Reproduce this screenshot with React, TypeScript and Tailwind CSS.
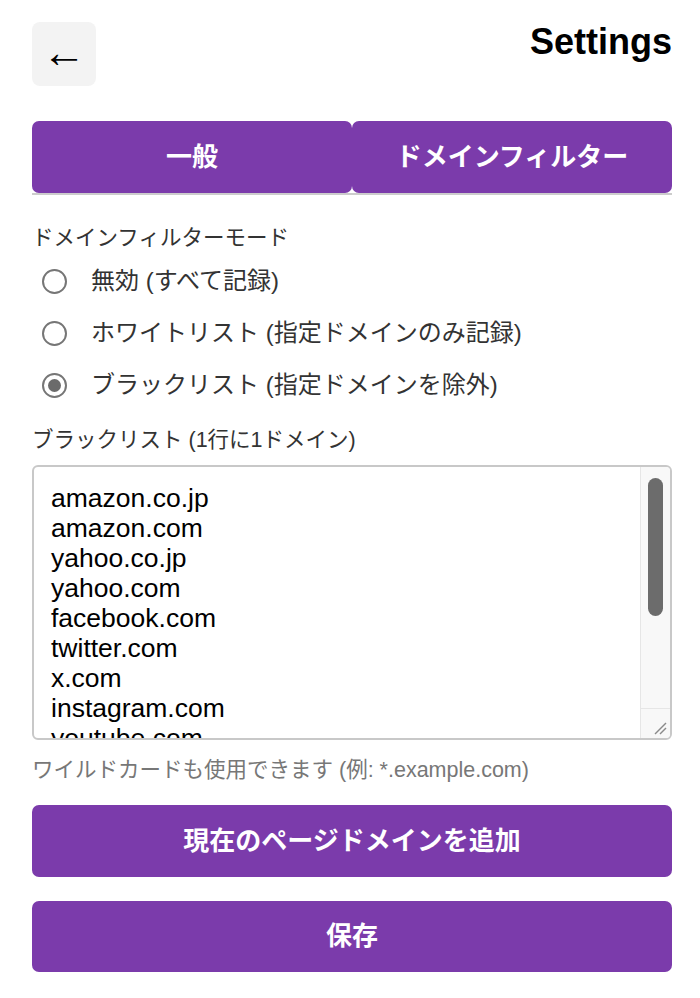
import React from 'react';

const domains = [
  'amazon.co.jp',
  'amazon.com',
  'yahoo.co.jp',
  'yahoo.com',
  'facebook.com',
  'twitter.com',
  'x.com',
  'instagram.com',
  'youtube.com',
  'google.com',
];

const modes = [
  { label: '無効 (すべて記録)', checked: false },
  { label: 'ホワイトリスト (指定ドメインのみ記録)', checked: false },
  { label: 'ブラックリスト (指定ドメインを除外)', checked: true },
];

const Radio = ({ checked }: { checked: boolean }) => (
  <span className="w-[25px] h-[25px] rounded-full border-[2.5px] border-[#767676] bg-white flex items-center justify-center shrink-0">
    {checked && <span className="w-[13px] h-[13px] rounded-full bg-[#6b6b6b]" />}
  </span>
);

export default function App() {
  return (
    <div
      className="w-[700px] min-h-[998px] bg-white pl-8 pr-7 pt-[22px] text-[#333]"
      style={{ fontFamily: '"Liberation Sans", "Noto Sans CJK JP", sans-serif' }}
    >
      {/* ヘッダー */}
      <div className="flex justify-between items-start">
        <button className="w-16 h-16 rounded-lg bg-[#f3f3f3] flex items-center justify-center text-black text-[44px] leading-none pb-[4px]">
          ←
        </button>
        <h1 className="text-[36px] font-bold text-black leading-none mt-[2px]">Settings</h1>
      </div>

      {/* タブ */}
      <div className="flex mt-[35px] border-b-2 border-[#cccccc]">
        <button className="flex-1 h-[72px] bg-[#7b3bab] rounded-[7px] text-white font-bold text-[26px]">一般</button>
        <button className="flex-1 h-[72px] bg-[#7b3bab] rounded-[7px] text-white font-bold text-[26px]">ドメインフィルター</button>
      </div>

      <p className="mt-[28px] text-[21.5px] leading-[30px]">ドメインフィルターモード</p>

      <div className="flex flex-col gap-[22px] mt-[13px] pl-[10px]">
        {modes.map((m) => (
          <label key={m.label} className="flex items-center gap-[24px] text-[24px] leading-[30px]">
            <Radio checked={m.checked} />
            <span>{m.label}</span>
          </label>
        ))}
      </div>

      <p className="mt-[25px] text-[21.5px] leading-[30px]">ブラックリスト (1行に1ドメイン)</p>

      {/* テキストエリア */}
      <div className="mt-[10px] h-[275px] border-2 border-[#c8c8c8] rounded-[6px] flex overflow-hidden">
        <div className="flex-1 overflow-hidden pt-[16px] pl-[17px] text-[26.5px] leading-[30px] text-black">
          {domains.map((d) => (
            <div key={d}>{d}</div>
          ))}
        </div>
        <div className="w-[30px] bg-[#f8f8f8] border-l border-[#e6e6e6] flex flex-col">
          <div className="flex-1 px-[7px] pt-[11px]">
            <div className="w-[15px] h-[138px] rounded-full bg-[#6c6c6c]" />
          </div>
          <div className="h-[30px] border-t border-[#e6e6e6] flex items-end justify-end p-[3px]">
            <svg width="14" height="14" viewBox="0 0 14 14" fill="none" stroke="#8a8a8a" strokeWidth="1.5">
              <line x1="13" y1="2" x2="2" y2="13" />
              <line x1="13" y1="7" x2="7" y2="13" />
            </svg>
          </div>
        </div>
      </div>

      <p className="mt-[16px] text-[21.5px] leading-[28px] text-[#777]">ワイルドカードも使用できます (例: *.example.com)</p>

      <button className="mt-[21px] w-full h-[72px] bg-[#7b3bab] rounded-[7px] text-white font-bold text-[26px]">
        現在のページドメインを追加
      </button>
      <button className="mt-[24px] w-full h-[71px] bg-[#7b3bab] rounded-[7px] text-white font-bold text-[26px]">
        保存
      </button>
    </div>
  );
}
